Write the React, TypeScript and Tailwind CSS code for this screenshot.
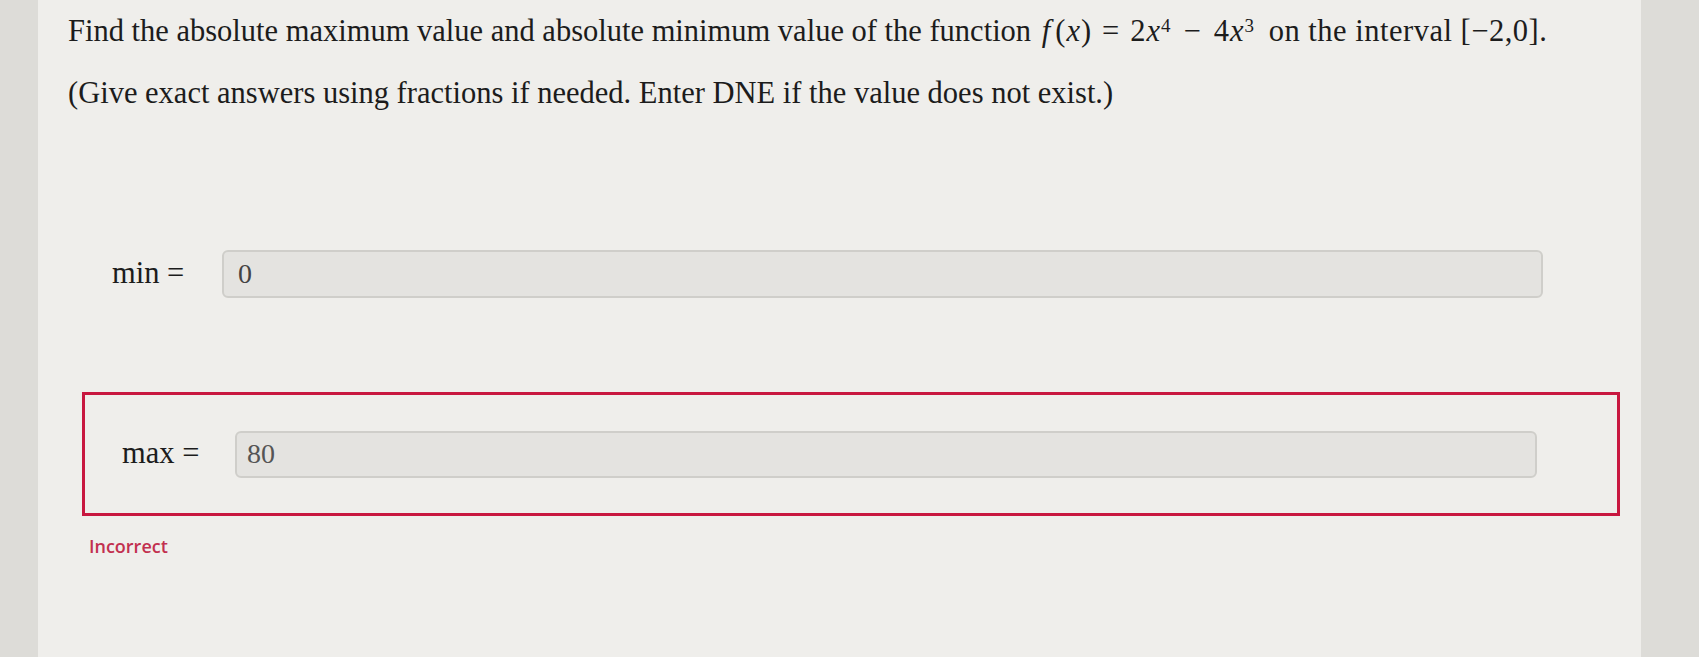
export default function App() {
  const serif = { fontFamily: '"Liberation Serif", "Times New Roman", serif' }
  return (
    <div className="flex w-[1699px] h-[657px] bg-[#efeeeb] overflow-hidden">
      <div className="w-[38px] shrink-0 bg-[#dddcd8]" />
      <div className="flex-1 pl-[30px] pt-[14px] text-[#1c1c1c]" style={serif}>
        <p className="text-[30.5px] leading-[34px] whitespace-nowrap">
          Find the absolute maximum value and absolute minimum value of the function{' '}
          <span className="ml-[3px] tracking-[1px]">
            <i>f</i>
            <span className="ml-[4px]">(</span>
            <i>x</i>)<span className="mx-[10px]">=</span>2<i>x</i>
            <sup className="text-[19px]">4</sup>
            <span className="mx-[12px]">−</span>4<i>x</i>
            <sup className="text-[19px]">3</sup>
          </span>{' '}
          <span className="ml-[6px] tracking-[0.5px]">on the interval [−2,0].</span>
        </p>
        <p className="mt-[28px] text-[30.5px] leading-[34px] whitespace-nowrap">
          (Give exact answers using fractions if needed. Enter DNE if the value does not exist.)
        </p>

        <div className="mt-[140px] flex items-center">
          <span className="w-[110px] pl-[44px] text-[30.5px] whitespace-nowrap">min =</span>
          <div className="ml-[44px] w-[1321px] h-[48px] flex items-center px-[14px] rounded-[6px] bg-[#e4e3e0] border-2 border-[#cfceca] text-[28px] text-[#444]">
            0
          </div>
        </div>

        <div className="mt-[94px] ml-[14px] w-[1538px] h-[124px] border-[3px] border-[#c8173f] flex items-center">
          <span className="pl-[37px] w-[150px] text-[30.5px] whitespace-nowrap">max =</span>
          <div className="w-[1302px] h-[47px] flex items-center px-[10px] rounded-[6px] bg-[#e4e3e0] border-2 border-[#cfceca] text-[28px] text-[#555]">
            80
          </div>
        </div>

        <p
          className="mt-[18px] ml-[21px] text-[18px] leading-[24px] font-semibold text-[#c2304f]"
          style={{ fontFamily: '"Open Sans", "Noto Sans", sans-serif' }}
        >
          Incorrect
        </p>
      </div>
      <div className="w-[58px] shrink-0 bg-[#dddcd8]" />
    </div>
  )
}
